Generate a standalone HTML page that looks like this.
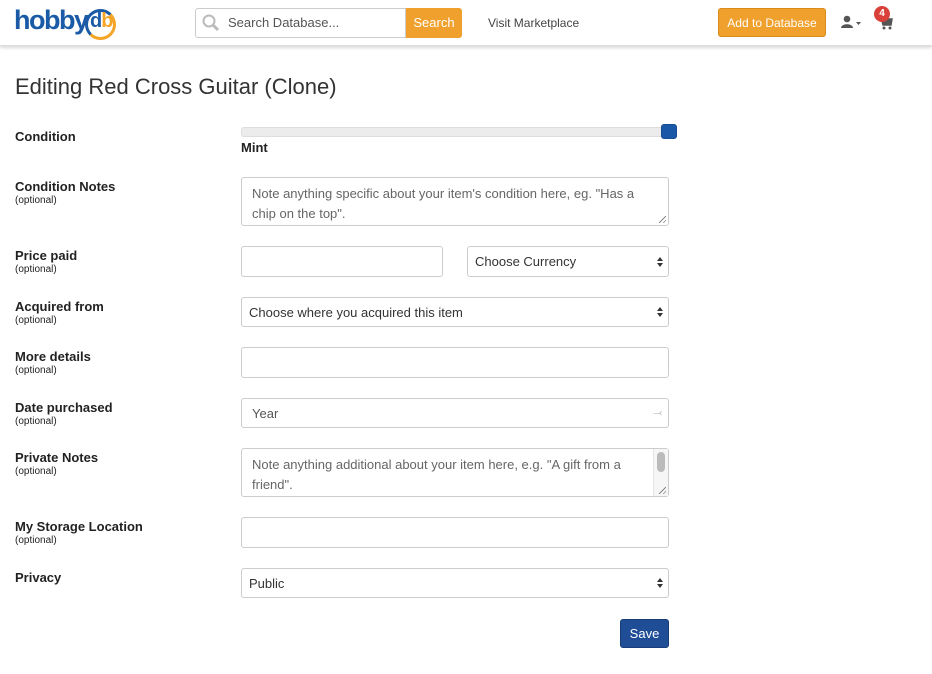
<!DOCTYPE html>
<html><head><style>
*{box-sizing:border-box;margin:0;padding:0}
body{width:932px;height:674px;background:#fff;font-family:"Liberation Sans",sans-serif;color:#222;position:relative;overflow:hidden}
.hdr{position:absolute;left:0;top:0;width:932px;height:46px;background:#fff;border-bottom:1px solid #ddd;box-shadow:0 2px 3px rgba(0,0,0,.15)}
.abs{position:absolute}
.lbl{position:absolute;left:15px;font-size:13px;font-weight:bold;color:#222}
.lbl small{display:block;font-size:10px;font-weight:normal;margin-top:1px}
.in{position:absolute;border:1px solid #ccc;border-radius:3px;background:#fff;font-size:13px;color:#555;padding:0 7px;display:flex;align-items:center}
.ta{align-items:flex-start;padding:6px 10px;line-height:20px;color:#666}
.sel::after{content:"";position:absolute;right:5px;top:50%;margin-top:-5px;border-left:3px solid transparent;border-right:3px solid transparent;border-bottom:4px solid #333;width:0;height:0}
.sel::before{content:"";position:absolute;right:5px;top:50%;margin-top:1px;border-left:3px solid transparent;border-right:3px solid transparent;border-top:4px solid #333;width:0;height:0}
.grip{position:absolute;right:2px;bottom:2px;width:7px;height:7px;background:linear-gradient(135deg,transparent 45%,#888 45%,#888 55%,transparent 55%,transparent 75%,#888 75%,#888 85%,transparent 85%)}
</style></head><body>
<div class="hdr">
 <div class="abs" style="left:14px;top:5px;font-size:27px;font-weight:bold;color:#1a5aa6;letter-spacing:-1.5px">hobby</div>
 <div class="abs" style="left:85px;top:9px;width:31px;height:31px;border-radius:50%;border:3px solid #f4a426;border-left-color:#1a5aa6;border-top-color:#1a5aa6"></div>
 <div class="abs" style="left:90px;top:10px;font-size:20px;font-weight:bold;color:#1a5aa6;letter-spacing:-1px">d<span style="color:#f4a426">b</span></div>
 <div class="abs" style="left:195px;top:8px;width:211px;height:30px;border:1px solid #ccc;border-radius:3px 0 0 3px"></div>
 <svg class="abs" style="left:202px;top:14px" width="18" height="18" viewBox="0 0 18 18"><circle cx="7" cy="7" r="5.5" fill="none" stroke="#bbb" stroke-width="2"/><path d="M11 11l5 5" stroke="#bbb" stroke-width="3"/></svg>
 <div class="abs" style="left:228px;top:15px;font-size:13px;color:#555">Search Database...</div>
 <div class="abs" style="left:406px;top:8px;width:56px;height:30px;background:#f0a02c;border-radius:0 3px 3px 0;color:#fff;font-size:13px;text-align:center;line-height:30px">Search</div>
 <div class="abs" style="left:488px;top:16px;font-size:12px;color:#444">Visit Marketplace</div>
 <div class="abs" style="left:718px;top:8px;width:108px;height:29px;background:#f0a02c;border:1px solid #d88c1c;border-radius:3px;color:#fff;font-size:12px;text-align:center;line-height:29px">Add to Database</div>
 <svg class="abs" style="left:841px;top:15px" width="22" height="14" viewBox="0 0 22 14"><circle cx="6" cy="4" r="3.3" fill="#555"/><path d="M0 13c0-5 12-5 12 0z" fill="#555"/><path d="M15 7h5l-2.5 3z" fill="#555"/></svg>
 <svg class="abs" style="left:878px;top:16px" width="15" height="14" viewBox="0 0 15 14"><path d="M0 1h3l2 8h8l1-6H4" fill="#555" stroke="#555" stroke-width="1.5"/><circle cx="6" cy="12" r="1.5" fill="#555"/><circle cx="12" cy="12" r="1.5" fill="#555"/></svg>
 <div class="abs" style="left:874px;top:6px;width:16px;height:16px;border-radius:50%;background:#d9403a;color:#fff;font-size:10px;font-weight:bold;text-align:center;line-height:16px">4</div>
</div>
<div class="abs" style="left:15px;top:74px;font-size:22px;color:#333">Editing Red Cross Guitar (Clone)</div>

<div class="lbl" style="top:129px">Condition</div>
<div class="abs" style="left:241px;top:127px;width:430px;height:10px;background:#ececec;border:1px solid #ddd;border-radius:3px"></div>
<div class="abs" style="left:661px;top:124px;width:16px;height:15px;background:#1a57a6;border:1px solid #174d92;border-radius:3px"></div>
<div class="abs" style="left:241px;top:140px;font-size:13px;font-weight:bold">Mint</div>

<div class="lbl" style="top:179px">Condition Notes<small>(optional)</small></div>
<div class="in ta" style="left:241px;top:177px;width:428px;height:49px">Note anything specific about your item's condition here, eg. "Has a chip on the top".<div class="grip"></div></div>

<div class="lbl" style="top:248px">Price paid<small>(optional)</small></div>
<div class="in" style="left:241px;top:246px;width:202px;height:31px"></div>
<div class="in sel" style="left:467px;top:246px;width:202px;height:31px;color:#333">Choose Currency</div>

<div class="lbl" style="top:299px">Acquired from<small>(optional)</small></div>
<div class="in sel" style="left:241px;top:297px;width:428px;height:30px;color:#333">Choose where you acquired this item</div>

<div class="lbl" style="top:349px">More details<small>(optional)</small></div>
<div class="in" style="left:241px;top:347px;width:428px;height:31px"></div>

<div class="lbl" style="top:400px">Date purchased<small>(optional)</small></div>
<div class="in" style="left:241px;top:398px;width:428px;height:30px;padding-left:10px">Year<span style="position:absolute;right:6px;color:#aaa;font-size:11px">⤙</span></div>

<div class="lbl" style="top:450px">Private Notes<small>(optional)</small></div>
<div class="in ta" style="left:241px;top:448px;width:428px;height:49px;padding-right:24px">Note anything additional about your item here, e.g. "A gift from a friend".
<div style="position:absolute;right:0;top:0;width:15px;height:47px;background:#f6f6f6;border-left:1px solid #e4e4e4"></div>
<div style="position:absolute;right:3px;top:3px;width:8px;height:20px;background:#bbb;border-radius:4px"></div><div class="grip"></div></div>

<div class="lbl" style="top:519px">My Storage Location<small>(optional)</small></div>
<div class="in" style="left:241px;top:517px;width:428px;height:31px"></div>

<div class="lbl" style="top:570px">Privacy</div>
<div class="in sel" style="left:241px;top:568px;width:428px;height:30px;color:#333">Public</div>

<div class="abs" style="left:620px;top:619px;width:49px;height:29px;background:#1f4e96;border:1px solid #173d78;border-radius:3px;color:#fff;font-size:13px;text-align:center;line-height:27px">Save</div>
</body></html>
